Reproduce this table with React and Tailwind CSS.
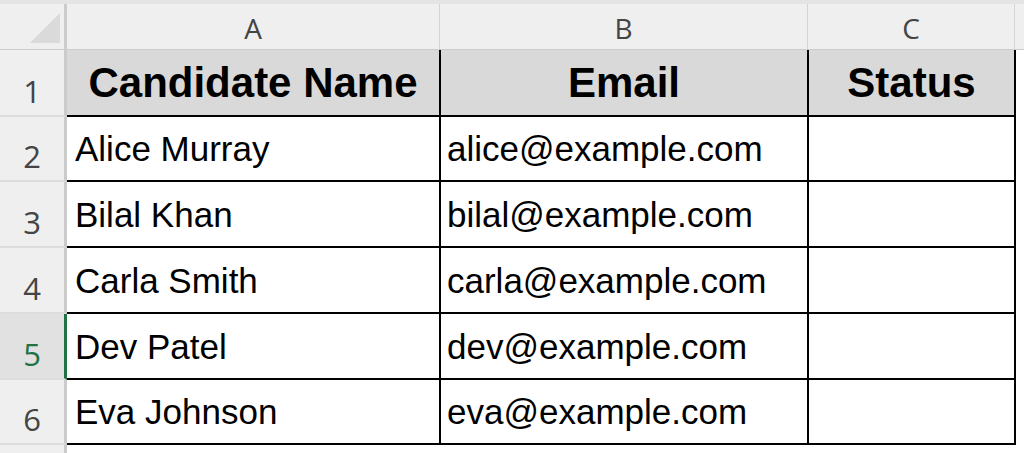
import React from "react";

const rows = [
  { n: 2, name: "Alice Murray", email: "alice@example.com", h: "h-[65px]" },
  { n: 3, name: "Bilal Khan", email: "bilal@example.com", h: "h-[66px]" },
  { n: 4, name: "Carla Smith", email: "carla@example.com", h: "h-[66px]" },
  { n: 5, name: "Dev Patel", email: "dev@example.com", h: "h-[66px]", sel: true },
  { n: 6, name: "Eva Johnson", email: "eva@example.com", h: "h-[65px]" },
];

function RowHead({ n, sel }) {
  return (
    <div
      className={
        "w-[67px] shrink-0 flex items-end justify-center pb-[8px] border-b-2 border-b-[#dcdcdc] border-r-[3px] font-['Open_Sans','Noto_Sans',sans-serif] text-[31px] leading-none " +
        (sel
          ? "bg-[#e1e1e1] border-r-[#217346] text-[#217346]"
          : "bg-[#efefef] border-r-[#cbcbcb] text-[#444]")
      }
    >
      {n}
    </div>
  );
}

export default function App() {
  return (
    <div className="w-[1024px] h-[453px] bg-white overflow-hidden flex flex-col font-['Liberation_Sans',Arial,sans-serif]">
      <div className="h-[4px] shrink-0 bg-[#e4e4e4]" />
      {/* column header */}
      <div className="h-[46px] shrink-0 flex bg-[#efefef] border-b border-[#cccccc] text-[#444] font-['Open_Sans','Noto_Sans',sans-serif] text-[28px] leading-none">
        <div className="w-[67px] shrink-0 border-r-[3px] border-[#cbcbcb] relative">
          <svg className="absolute left-[30px] top-[9px]" width="30" height="30" viewBox="0 0 30 30">
            <polygon points="0,30 30,30 30,0" fill="#dadada" />
          </svg>
        </div>
        <div className="w-[373px] shrink-0 border-r border-[#d4d4d4] flex items-end justify-center pb-[7px]">A</div>
        <div className="w-[368px] shrink-0 border-r border-[#d4d4d4] flex items-end justify-center pb-[7px]">B</div>
        <div className="w-[207px] shrink-0 border-r border-[#d4d4d4] flex items-end justify-center pb-[7px]">C</div>
        <div className="flex-1" />
      </div>
      {/* row 1 */}
      <div className="h-[67px] shrink-0 flex">
        <RowHead n={1} />
        <div className="w-[374px] shrink-0 bg-[#d9d9d9] border-r-2 border-b-2 border-black flex items-center justify-center font-bold text-[42px] text-black leading-none">
          Candidate Name
        </div>
        <div className="w-[368px] shrink-0 bg-[#d9d9d9] border-r-2 border-b-2 border-black flex items-center justify-center font-bold text-[42px] text-black leading-none">
          Email
        </div>
        <div className="w-[207px] shrink-0 bg-[#d9d9d9] border-r-2 border-b-2 border-black flex items-center justify-center font-bold text-[42px] text-black leading-none">
          Status
        </div>
        <div className="flex-1" />
      </div>
      {rows.map((r) => (
        <div key={r.n} className={r.h + " shrink-0 flex"}>
          <RowHead n={r.n} sel={r.sel} />
          <div className="w-[374px] shrink-0 border-r-2 border-b-2 border-black flex items-center pl-[8px] text-[35px] text-black leading-none">
            {r.name}
          </div>
          <div className="w-[368px] shrink-0 border-r-2 border-b-2 border-black flex items-center pl-[6px] text-[35px] text-black leading-none">
            {r.email}
          </div>
          <div className="w-[207px] shrink-0 border-r-2 border-b-2 border-black" />
          <div className="flex-1" />
        </div>
      ))}
      <div className="flex-1 flex">
        <div className="w-[67px] shrink-0 bg-[#efefef] border-r-[3px] border-[#cbcbcb]" />
        <div className="flex-1" />
      </div>
    </div>
  );
}
